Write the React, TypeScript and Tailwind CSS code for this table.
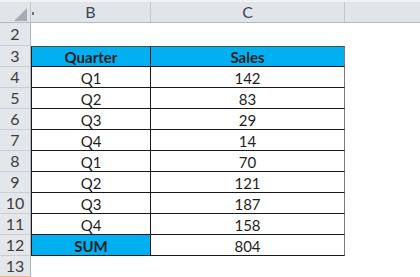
const rows: { n: number; q: string; s: string; kind?: 'head' | 'sum' }[] = [
  { n: 3, q: 'Quarter', s: 'Sales', kind: 'head' },
  { n: 4, q: 'Q1', s: '142' },
  { n: 5, q: 'Q2', s: '83' },
  { n: 6, q: 'Q3', s: '29' },
  { n: 7, q: 'Q4', s: '14' },
  { n: 8, q: 'Q1', s: '70' },
  { n: 9, q: 'Q2', s: '121' },
  { n: 10, q: 'Q3', s: '187' },
  { n: 11, q: 'Q4', s: '158' },
  { n: 12, q: 'SUM', s: '804', kind: 'sum' },
];

function RowHead({ n, last }: { n: number; last?: boolean }) {
  return (
    <div
      className={`h-[21px] w-[31px] shrink-0 flex items-center justify-center bg-[#e3e7ec] border-r border-b border-r-[#aeb4bc] ${
        last ? 'border-b-[#f0c27a]' : 'border-b-[#c9ced5]'
      } text-[16px] text-[#3d3d3d]`}
    >
      {n}
    </div>
  );
}

export default function App() {
  return (
    <div className="w-[420px] h-[277px] overflow-hidden bg-white font-['Lato','Liberation_Sans',sans-serif]">
      {/* column headers */}
      <div className="flex h-[23px] border-t-2 border-t-[#f1f2f4] border-b border-b-[#b3b9c1] bg-[#e1e5ea]">
        <div className="w-[31px] h-full shrink-0 flex items-end justify-end pr-[3px] pb-[1px] border-r border-[#c3c8cf]">
          <svg width="13" height="13" viewBox="0 0 13 13" className="block shrink-0">
            <path d="M13 0 L13 13 L0 13 Z" fill="#a7acb3" />
          </svg>
        </div>
        <div className="w-[120px] shrink-0 relative flex items-center justify-center border-r border-[#c3c8cf] text-[16px] text-[#3e4553]">
          <span className="absolute left-[1px] top-[10px] w-[2px] h-[3px] bg-[#6b7078]" />
          B
        </div>
        <div className="w-[194px] shrink-0 flex items-center justify-center border-r border-[#c3c8cf] text-[16px] text-[#3e4553]">
          C
        </div>
        <div className="flex-1" />
      </div>

      {/* row 2 */}
      <div className="flex">
        <div className="h-[23px] w-[31px] shrink-0 flex items-center justify-center bg-[#e3e7ec] border-r border-b border-r-[#aeb4bc] border-b-[#c9ced5] text-[16px] text-[#3d3d3d]">
          2
        </div>
        <div className="flex-1" />
      </div>

      {rows.map((r) => {
        const top = r.kind === 'head' ? 'border-t border-t-[#4a4a4a]' : '';
        return (
          <div key={r.n} className="flex">
            <RowHead n={r.n} />
            <div
              className={`h-[21px] w-[120px] shrink-0 flex items-center justify-center pt-[2px] border-l border-r border-b border-[#1a1a1a] ${top} text-[15px] text-[#1e1e1e] ${
                r.kind ? 'bg-[#00b0f0] font-bold' : ''
              }`}
            >
              {r.q}
            </div>
            <div
              className={`h-[21px] w-[194px] shrink-0 flex items-center justify-center pt-[2px] border-b border-b-[#1a1a1a] border-r border-r-[#7a7a7a] ${top} text-[15px] text-[#1e1e1e] ${
                r.kind === 'head' ? 'bg-[#00b0f0] font-bold' : ''
              }`}
            >
              {r.s}
            </div>
            <div className="flex-1" />
          </div>
        );
      })}

      {/* row 13 */}
      <div className="flex">
        <RowHead n={13} last />
        <div className="flex-1" />
      </div>
    </div>
  );
}
